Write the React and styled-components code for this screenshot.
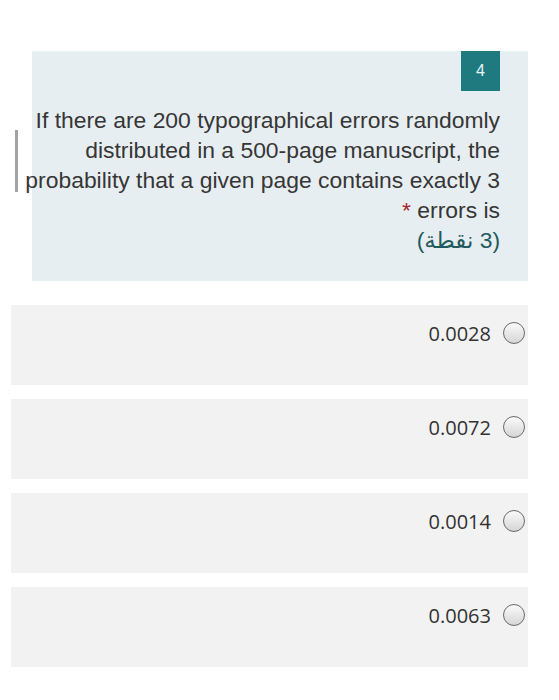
import styled, { createGlobalStyle } from "styled-components";

const GlobalStyle = createGlobalStyle`
  html, body {
    margin: 0;
    padding: 0;
    background: #fff;
  }
`;

const options = ["0.0028", "0.0072", "0.0014", "0.0063"];

function Option({ label }) {
  return (
    <OptionRow>
      <OptionLabel>{label}</OptionLabel>
      <Radio />
    </OptionRow>
  );
}

export default function App() {
  return (
    <Page>
      <GlobalStyle />
      <ScrollThumb />
      <QuestionCard>
        <Badge>4</Badge>
        <QuestionText>
          <Line>If there are 200 typographical errors randomly</Line>
          <Line>distributed in a 500-page manuscript, the</Line>
          <Line>probability that a given page contains exactly 3</Line>
          <Line>
            <Required>*</Required> errors is
          </Line>
          <Points dir="rtl">(3 نقطة)</Points>
        </QuestionText>
      </QuestionCard>
      <OptionList>
        {options.map((o) => (
          <Option key={o} label={o} />
        ))}
      </OptionList>
    </Page>
  );
}

const Page = styled.div`
  position: relative;
  width: 559px;
  min-height: 700px;
  padding-top: 51px;
  box-sizing: border-box;
  font-family: "Liberation Sans", Arial, sans-serif;
`;

const ScrollThumb = styled.div`
  position: absolute;
  left: 15px;
  top: 130px;
  width: 3px;
  height: 62px;
  background: #a3a3a3;
`;

const QuestionCard = styled.div`
  margin-left: 32px;
  width: 496px;
  height: 230px;
  background: #e7eef2;
  display: flex;
  flex-direction: column;
  align-items: flex-end;
  padding-right: 28px;
  box-sizing: border-box;
`;

const Badge = styled.div`
  width: 39px;
  height: 40px;
  background: #1f7a7f;
  color: #e6f4f4;
  font-size: 16px;
  display: flex;
  align-items: center;
  justify-content: center;
`;

const QuestionText = styled.div`
  margin-top: 14px;
  text-align: right;
  font-size: 22.9px;
  line-height: 30px;
  color: #363636;
`;

const Line = styled.div`
  white-space: nowrap;
`;

const Required = styled.span`
  color: #a4262c;
`;

const Points = styled.div`
  color: #1f5a5e;
  text-align: right;
  white-space: nowrap;
  font-family: "Liberation Sans", "DejaVu Sans", sans-serif;
`;

const OptionList = styled.div`
  margin-top: 24px;
  margin-left: 11px;
  width: 517px;
  display: flex;
  flex-direction: column;
  gap: 14px;
`;

const OptionRow = styled.div`
  height: 80px;
  background: #f2f2f2;
  display: flex;
  justify-content: flex-end;
  align-items: flex-start;
  gap: 12px;
  padding: 17px 3px 0 0;
  box-sizing: border-box;
`;

const OptionLabel = styled.span`
  font-family: "Open Sans", sans-serif;
  font-size: 20px;
  line-height: 24px;
  color: #333;
`;

const Radio = styled.span`
  width: 20px;
  height: 20px;
  border-radius: 50%;
  border: 1.5px solid #6a6a6a;
  background: linear-gradient(180deg, #fafafa 0%, #e4e4e4 60%, #d6d6d6 100%);
`;
